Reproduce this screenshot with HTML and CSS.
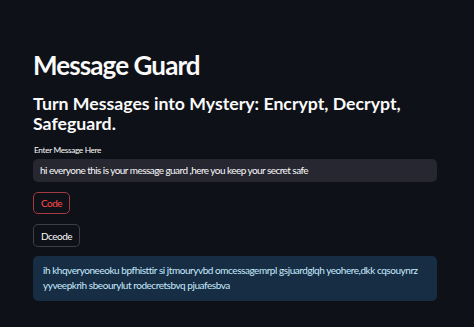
FILE: index.html
```html
<!DOCTYPE html>
<html>
<head>
<meta charset="utf-8">
<link rel="stylesheet" href="styles.css">
</head>
<body>
<main class="main">
  <h1 class="title">Message Guard</h1>
  <h3 class="subtitle">Turn Messages into Mystery: Encrypt, Decrypt, Safeguard.</h3>
  <label class="label">Enter Message Here</label>
  <div class="input">hi everyone this is your message guard ,here you keep your secret safe</div>
  <div class="btn-row"><button class="btn btn-primary">Code</button></div>
  <div class="btn-row"><button class="btn">Dceode</button></div>
  <div class="info">ih khqveryoneeoku bpfhisttir si jtmouryvbd omcessagemrpl gsjuardglqh yeohere,dkk cqsouynrz yyveepkrih sbeourylut rodecretsbvq pjuafesbva</div>
</main>
</body>
</html>
```
FILE: styles.css
```css
html, body {
  margin: 0;
  padding: 0;
  background: #0e1117;
  color: #fafafa;
  font-family: Lato, "Noto Sans", sans-serif;
}
.main {
  width: 404px;
  padding: 49px 0 0 33px;
  display: flex;
  flex-direction: column;
}
.title {
  margin: 0;
  font-size: 26px;
  font-weight: 700;
  line-height: 32px;
  letter-spacing: -0.9px;
}
.subtitle {
  margin: 13px 0 0 0;
  font-size: 17.7px;
  font-weight: 700;
  line-height: 19.5px;
}
.label {
  margin-top: 12px;
  font-size: 8.3px;
  line-height: 10px;
  letter-spacing: -0.35px;
  padding-left: 1px;
}
.input {
  margin-top: 4px;
  height: 23px;
  background: #262730;
  border-radius: 5px;
  font-size: 10px;
  line-height: 23px;
  letter-spacing: -0.55px;
  padding: 0 7px;
  box-sizing: border-box;
}
.btn-row {
  margin-top: 10px;
  display: flex;
}
.btn {
  font-family: inherit;
  background: #0e1117;
  color: #fafafa;
  border: 1px solid rgba(250, 250, 250, 0.2);
  border-radius: 5px;
  height: 23px;
  padding: 0 7px;
  font-size: 10px;
  letter-spacing: -0.5px;
  box-sizing: border-box;
}
.btn-primary {
  color: #ff4b4b;
  border-color: #a23a3f;
  height: 22px;
}
.info {
  margin-top: 9px;
  background: #172d43;
  color: #c7ebff;
  border-radius: 5px;
  padding: 7px 10px 8px 10px;
  font-size: 10px;
  line-height: 15px;
  letter-spacing: -0.45px;
  box-sizing: border-box;
}
```
